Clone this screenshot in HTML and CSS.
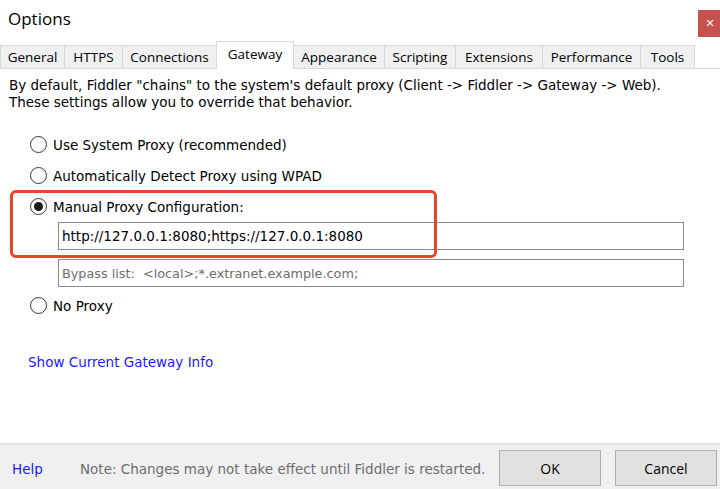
FILE: index.html
```html
<!DOCTYPE html>
<html>
<head>
<meta charset="utf-8">
<link rel="stylesheet" href="styles.css">
</head>
<body>
<div class="dialog">
  <div class="titlebar">
    <div class="title">Options</div>
    <div class="close">&#x2715;</div>
  </div>
  <div class="tabs">
    <div class="tab w-general">General</div>
    <div class="tab w-https">HTTPS</div>
    <div class="tab w-conn">Connections</div>
    <div class="tab active w-gw">Gateway</div>
    <div class="tab w-app">Appearance</div>
    <div class="tab w-scr">Scripting</div>
    <div class="tab w-ext">Extensions</div>
    <div class="tab w-perf">Performance</div>
    <div class="tab w-tools">Tools</div>
  </div>
  <div class="content">
    <p class="desc">By default, Fiddler "chains" to the system's default proxy (Client -&gt; Fiddler -&gt; Gateway -&gt; Web).<br>These settings allow you to override that behavior.</p>
    <div class="options">
      <div class="radio-row"><span class="radio"></span><span>Use System Proxy (recommended)</span></div>
      <div class="radio-row"><span class="radio"></span><span>Automatically Detect Proxy using WPAD</span></div>
      <div class="manual">
        <div class="radio-row"><span class="radio checked"></span><span>Manual Proxy Configuration:</span></div>
        <div class="field">http://127.0.0.1:8080;https://127.0.0.1:8080</div>
        <div class="field placeholder">Bypass list:&nbsp; &lt;local&gt;;*.extranet.example.com;</div>
        <div class="highlight"></div>
      </div>
      <div class="radio-row"><span class="radio"></span><span>No Proxy</span></div>
    </div>
    <div class="link">Show Current Gateway Info</div>
  </div>
  <div class="footer">
    <span class="help">Help</span>
    <span class="note">Note: Changes may not take effect until Fiddler is restarted.</span>
    <div class="btn ok">OK</div>
    <div class="btn cancel">Cancel</div>
  </div>
</div>
</body>
</html>
```
FILE: styles.css
```css
html, body {
  margin: 0;
  padding: 0;
  background: #ffffff;
}
.dialog {
  width: 720px;
  height: 489px;
  display: flex;
  flex-direction: column;
  overflow: hidden;
  font-family: "DejaVu Sans", "Liberation Sans", sans-serif;
  color: #000;
}
.titlebar {
  height: 41px;
  flex-shrink: 0;
  display: flex;
  justify-content: space-between;
  align-items: flex-start;
}
.title {
  font-family: "Open Sans", "Noto Sans", sans-serif;
  font-size: 17px;
  margin: 7px 0 0 8px;
}
.close {
  margin-top: 10px;
  width: 22px;
  height: 27px;
  background: #c75050;
  color: #fff;
  font-size: 11px;
  display: flex;
  align-items: center;
  justify-content: center;
  padding-left: 2px;
  box-sizing: border-box;
}
.tabs {
  display: flex;
  height: 27px;
  flex-shrink: 0;
  align-items: flex-end;
  border-bottom: 1px solid #d9d9d9;
  font-family: "Open Sans", "Noto Sans", sans-serif;
  font-size: 13.5px;
}
.tab {
  height: 23px;
  box-sizing: border-box;
  background: #f0f0f0;
  border: 1px solid #d9d9d9;
  border-bottom: none;
  margin-right: -1px;
  display: flex;
  align-items: center;
  justify-content: center;
  padding-bottom: 1px;
}
.tab.active {
  height: 28px;
  background: #fff;
  margin-bottom: -1px;
  padding-bottom: 4px;
  position: relative;
}
.w-general { width: 65px; }
.w-https { width: 59px; }
.w-conn { width: 95px; }
.w-gw { width: 78px; }
.w-app { width: 92px; }
.w-scr { width: 72px; }
.w-ext { width: 88px; }
.w-perf { width: 99px; }
.w-tools { width: 55px; }
.content {
  flex: 1;
  padding: 8px 0 0 9px;
  font-size: 13.5px;
}
.desc {
  margin: 0;
  line-height: 17px;
}
.options {
  margin-top: 18px;
  padding-left: 21px;
}
.radio-row {
  display: flex;
  align-items: center;
  height: 31px;
}
.radio {
  width: 17px;
  height: 17px;
  box-sizing: border-box;
  border: 1px solid #333;
  border-radius: 50%;
  margin-right: 6px;
  display: flex;
  align-items: center;
  justify-content: center;
  background: #fff;
}
.radio.checked::after {
  content: "";
  width: 9px;
  height: 9px;
  border-radius: 50%;
  background: #1a1a1a;
}
.manual {
  position: relative;
}
.field {
  margin-left: 28px;
  width: 626px;
  height: 28px;
  box-sizing: border-box;
  border: 1px solid #8a8a8a;
  padding: 0 0 0 3px;
  display: flex;
  align-items: center;
  margin-bottom: 9px;
}
.field.placeholder {
  color: #6d6d6d;
  font-size: 12.8px;
  margin-bottom: 3px;
}
.highlight {
  position: absolute;
  left: -20px;
  top: -1px;
  width: 427px;
  height: 68px;
  border: 3px solid #e8442a;
  border-radius: 6px;
  box-sizing: border-box;
}
.link {
  margin-top: 33px;
  margin-left: 19px;
  color: #1a1aff;
}
.footer {
  height: 46px;
  flex-shrink: 0;
  box-sizing: border-box;
  background: #f0f0f0;
  border-top: 2px solid #e0e0e0;
  display: flex;
  align-items: flex-start;
  padding-top: 5px;
  font-size: 13.5px;
}
.help {
  color: #1a1aff;
  margin-left: 12px;
  width: 68px;
  flex-shrink: 0;
  line-height: 38px;
}
.note {
  color: #6d6d6d;
  width: 419px;
  flex-shrink: 0;
  line-height: 38px;
  white-space: nowrap;
}
.btn {
  width: 102px;
  height: 36px;
  flex-shrink: 0;
  box-sizing: border-box;
  background: #e1e1e1;
  border: 1px solid #adadad;
  display: flex;
  align-items: center;
  justify-content: center;
  font-family: "Open Sans", "Noto Sans", sans-serif;
  font-size: 14px;
}
.btn.ok { margin-right: 14px; }
```
